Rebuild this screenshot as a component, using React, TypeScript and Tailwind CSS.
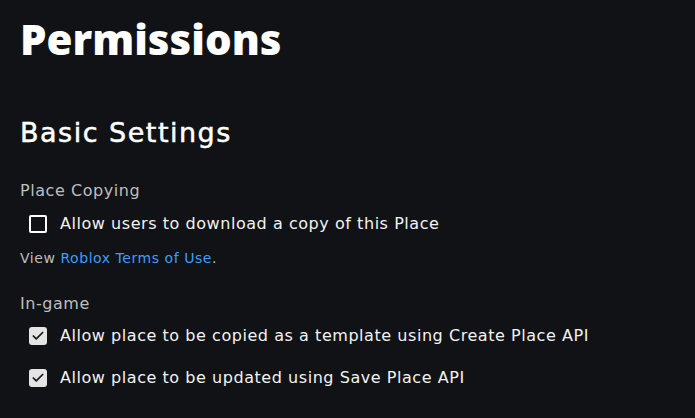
import { Check } from "lucide-react";

function Checkbox({ checked }: { checked: boolean }) {
  return checked ? (
    <span className="flex h-[18px] w-[18px] shrink-0 items-center justify-center rounded-[3px] bg-[#e4e4e4]">
      <Check className="h-[14px] w-[14px] text-[#191a1f]" strokeWidth={3} />
    </span>
  ) : (
    <span className="h-[18px] w-[18px] shrink-0 rounded-[2px] border-2 border-white" />
  );
}

function Option({ checked, label }: { checked: boolean; label: string }) {
  return (
    <label className="flex items-center gap-[13px] pl-[9px]">
      <Checkbox checked={checked} />
      <span className="text-[16px] leading-[20px] tracking-[0.55px] text-[#f2f2f2]">{label}</span>
    </label>
  );
}

export default function App() {
  return (
    <div className="h-[418px] w-[695px] overflow-hidden bg-[#111216] px-[20px] font-['DejaVu_Sans',sans-serif] tracking-[0.55px]">
      <h1 className="pt-[14px] font-['Open_Sans',sans-serif] text-[42px] font-extrabold leading-[50px] tracking-normal text-white">
        Permissions
      </h1>

      <h2 className="mt-[51px] text-[27px] font-normal leading-[36px] tracking-[1.5px] text-white [-webkit-text-stroke:0.5px_white]">
        Basic Settings
      </h2>

      <div className="mt-[30px] text-[16px] leading-[20px] text-[#bdbebe]">Place Copying</div>
      <div className="mt-[13px]">
        <Option checked={false} label="Allow users to download a copy of this Place" />
      </div>
      <div className="mt-[14px] text-[14px] leading-[20px] text-[#bdbebe]">
        View <span className="text-[#3c9dff]">Roblox Terms of Use</span>.
      </div>

      <div className="mt-[26px] text-[16px] leading-[20px] text-[#bdbebe]">In-game</div>
      <div className="mt-[12px] flex flex-col gap-[22px]">
        <Option checked label="Allow place to be copied as a template using Create Place API" />
        <Option checked label="Allow place to be updated using Save Place API" />
      </div>
    </div>
  );
}
